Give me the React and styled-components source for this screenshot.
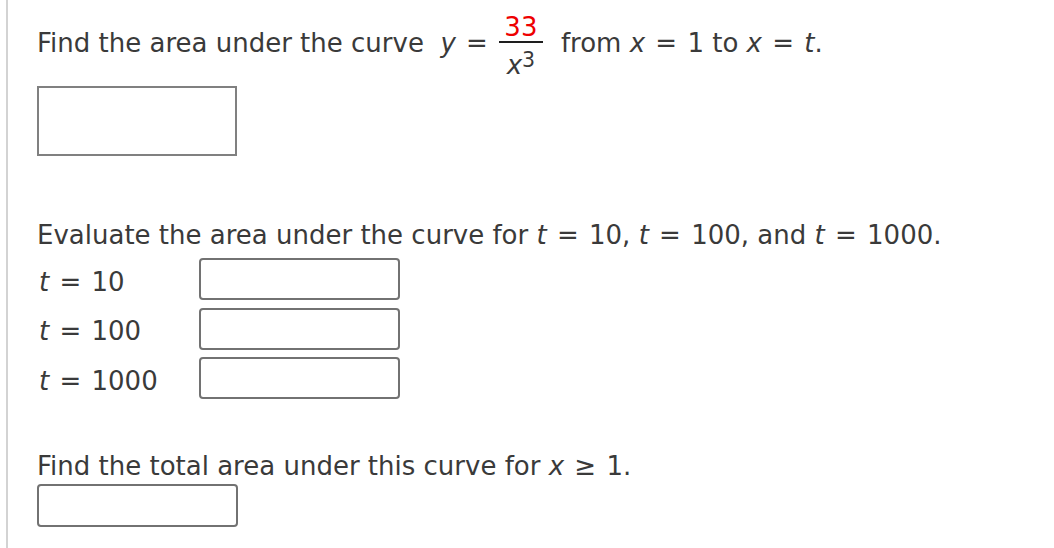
import React from 'react'
import styled, { createGlobalStyle } from 'styled-components'

const GlobalStyle = createGlobalStyle`
    html, body {
        margin: 0;
        padding: 0;
        background: #ffffff;
    }
`;

const Page = styled.div`
    margin-left: 6px;
    border-left: 2px solid #d3d3d3;
    min-height: 548px;
    box-sizing: border-box;
    padding: 6px 0 0 29px;
    font-family: 'DejaVu Sans', Verdana, sans-serif;
    font-size: 26px;
    color: #3a3a3a;
`;

const Line = styled.div`
    display: flex;
    align-items: center;
    white-space: pre;
    line-height: 30px;
    margin-top: ${p => p.$top || 0}px;
`;

const Var = styled.span`
    font-style: italic;
`;

// relation signs sit a little wider than the plain spaces give
const Op = styled.span`
    margin: 0 2px;
`;

const Fraction = styled.span`
    display: inline-flex;
    flex-direction: column;
    align-items: center;
    width: 44px;
    padding-top: 7px;
    margin: 0 18px 0 9px;
`;

const Numerator = styled.span`
    color: #ee0000;
    line-height: 28px;
`;

const Bar = styled.span`
    align-self: stretch;
    height: 2px;
    background: #1e1e1e;
`;

const Denominator = styled.span`
    line-height: 30px;
    padding-top: 7px;
    font-style: italic;
    sup {
        font-style: normal;
        font-size: 20.5px;
        vertical-align: 7px;
        line-height: 0;
    }
`;

const AnswerBox = styled.div`
    box-sizing: border-box;
    width: ${p => p.$w || 201}px;
    height: ${p => p.$h || 43}px;
    border: 2px solid ${p => (p.$square ? '#808080' : '#727272')};
    border-radius: ${p => (p.$square ? 0 : 4)}px;
    background: #fff;
    margin-top: ${p => p.$top || 0}px;
`;

const Rows = styled.div`
    display: grid;
    grid-template-columns: 162px 201px;
    grid-auto-rows: 42px;
    row-gap: 7.5px;
    margin-top: ${p => p.$top || 0}px;
`;

const Label = styled.div`
    display: flex;
    align-items: center;
    white-space: pre;
    line-height: 30px;
    padding: 5px 0 0 2px;
`;

const Eq = ({ v, n, op = '=' }) => (
    <>
        <Var>{v}</Var> <Op>{op}</Op> {n}
    </>
);

export default function App() {
    return (
        <>
            <GlobalStyle />
            <Page>
                <Line>
                    <span>{'Find the area under the curve  '}</span>
                    <Var>y</Var>
                    <span> <Op>=</Op></span>
                    <Fraction>
                        <Numerator>33</Numerator>
                        <Bar />
                        <Denominator>x<sup>3</sup></Denominator>
                    </Fraction>
                    <span>from <Eq v="x" n="1" /> to <Eq v="x" n={<Var>t</Var>} />.</span>
                </Line>
                <AnswerBox $square $w={200} $h={70} $top={6} />

                <Line $top={64}>
                    <span>Evaluate the area under the curve for <Eq v="t" n="10" />, <Eq v="t" n="100" />, and <Eq v="t" n="1000" />.</span>
                </Line>
                <Rows $top={8}>
                    <Label><span><Eq v="t" n="10" /></span></Label>
                    <AnswerBox $h={42} />
                    <Label><span><Eq v="t" n="100" /></span></Label>
                    <AnswerBox $h={42} />
                    <Label><span><Eq v="t" n="1000" /></span></Label>
                    <AnswerBox $h={42} />
                </Rows>

                <Line $top={52}>
                    <span>Find the total area under this curve for <Eq v="x" n="1" op="≥" />.</span>
                </Line>
                <AnswerBox $top={3} />
            </Page>
        </>
    )
}
